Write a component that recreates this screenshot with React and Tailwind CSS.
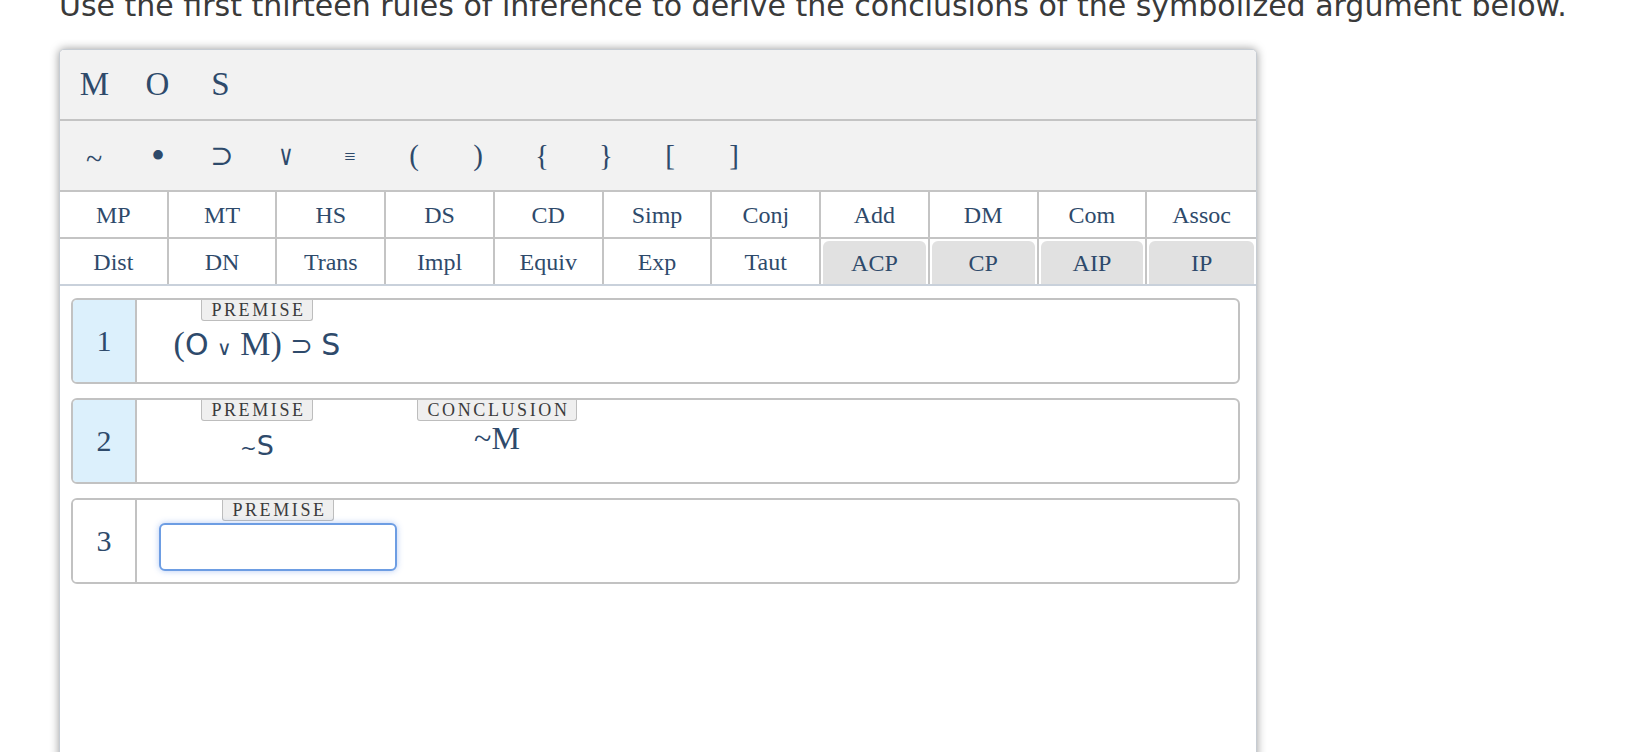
import React from 'react';

const serif = "font-['Liberation_Serif','DejaVu_Serif',serif]";
const sans = "font-['DejaVu_Sans',sans-serif]";

const letters = ['M', 'O', 'S'];
const symbols = ['~', '•', '⊃', '∨', '≡', '(', ')', '{', '}', '[', ']'];
const rulesTop = ['MP', 'MT', 'HS', 'DS', 'CD', 'Simp', 'Conj', 'Add', 'DM', 'Com', 'Assoc'];
const rulesBottom = ['Dist', 'DN', 'Trans', 'Impl', 'Equiv', 'Exp', 'Taut', 'ACP', 'CP', 'AIP', 'IP'];
const shaded = ['ACP', 'CP', 'AIP', 'IP'];

// per-symbol tweaks so the glyphs sit like the reference toolbar
const symbolStyle = {
    '~': 'text-[30px] pt-[6px]',
    '•': 'text-[40px] leading-none',
    '⊃': 'text-[28px]',
    '∨': 'text-[28px] scale-x-75',
    '≡': 'text-[20px]',
};

function Tag({ children }) {
    return (
        <div className={`${serif} text-[18px] leading-[20px] tracking-[2.6px] text-[#3c3c3c] bg-[#efefef] border border-t-0 border-[#bdbdbd] rounded-b-[3px] pl-[9px] pr-[6px]`}>
            {children}
        </div>
    );
}

function Cell({ label, children }) {
    return (
        <div className="mx-[22px] min-w-[196px] flex flex-col items-center">
            <Tag>{label}</Tag>
            {children}
        </div>
    );
}

function ProofRow({ num, active, children }) {
    return (
        <div className="flex h-[86px] rounded-[6px] border-2 border-[#c2c2c2] overflow-hidden">
            <div className={`w-[64px] shrink-0 border-r-2 border-[#c2c2c2] flex justify-center pt-[18px] ${serif} text-[30px] text-[#2e4a6b] ${active ? 'bg-[#dcf0fc]' : 'bg-white'}`}>
                {num}
            </div>
            <div className="flex">{children}</div>
        </div>
    );
}

export default function App() {
    return (
        <div className="h-[752px] overflow-hidden bg-white">
            <p className="ml-[59px] -mt-[11px] text-[30px] leading-[34px] text-[#3a3a3a] font-['DejaVu_Sans',sans-serif] whitespace-nowrap">
                Use the first thirteen rules of inference to derive the conclusions of the symbolized argument below.
            </p>

            <div className="ml-[59px] mt-[26px] w-[1198px] h-[720px] bg-white rounded-t-[5px] border border-[#c6ccd3] shadow-[0_0_10px_rgba(0,0,0,0.4)] overflow-hidden">
                {/* variables */}
                <div className={`h-[71px] bg-[#f2f2f2] border-b-2 border-[#c4c4c4] flex items-center pl-[3px] ${serif} text-[33px] text-[#2e4a6b]`}>
                    {letters.map((l) => (
                        <span key={l} className="w-[63px] text-center">{l}</span>
                    ))}
                </div>

                {/* operators */}
                <div className={`h-[71px] bg-[#f2f2f2] border-b-2 border-[#c4c4c4] flex items-center pl-[2px] ${serif} text-[29px] text-[#2e4a6b]`}>
                    {symbols.map((s, i) => (
                        <span key={i} className={`w-[64px] text-center ${symbolStyle[s] || ''}`}>{s}</span>
                    ))}
                </div>

                {/* rules */}
                <div className={`grid grid-cols-11 ${serif} text-[24px] text-[#2e4a6b] border-b-2 border-[#c9d1db]`}>
                    {rulesTop.map((r, i) => (
                        <div key={r} className={`h-[47px] flex items-center justify-center border-b-2 border-[#c4c4c4] ${i < 10 ? 'border-r-2' : ''}`}>
                            {r}
                        </div>
                    ))}
                    {rulesBottom.map((r, i) => (
                        <div key={r} className={`h-[45px] border-[#c4c4c4] ${i < 10 ? 'border-r-2' : ''} ${shaded.includes(r) ? 'px-[2px] pt-[2px]' : ''}`}>
                            <div className={`h-full flex items-center justify-center ${shaded.includes(r) ? 'bg-[#e1e1e1] rounded-t-[6px]' : ''}`}>
                                {r}
                            </div>
                        </div>
                    ))}
                </div>

                {/* proof lines */}
                <div className="pl-[11px] pr-[16px] pt-[12px] flex flex-col gap-[14px]">
                    <ProofRow num="1" active>
                        <Cell label="PREMISE">
                            <div className={`${serif} text-[34px] leading-[38px] mt-[4px] text-[#2e4a6b] whitespace-pre`}>
                                (<span className={`${sans} text-[30px]`}>O</span> <span className={`${sans} text-[20px]`}>∨</span> M) <span className={`${sans} text-[27px]`}>⊃</span> <span className={`${sans} text-[30px]`}>S</span>
                            </div>
                        </Cell>
                    </ProofRow>
                    <ProofRow num="2" active>
                        <Cell label="PREMISE">
                            <div className={`${sans} text-[27px] leading-[34px] mt-[8px] text-[#2e4a6b]`}>
                                <span className="text-[20px]">~</span>S
                            </div>
                        </Cell>
                        <Cell label="CONCLUSION">
                            <div className={`${serif} text-[32px] leading-[34px] text-[#2e4a6b]`}>~M</div>
                        </Cell>
                    </ProofRow>
                    <ProofRow num="3">
                        <Cell label="PREMISE">
                            <input
                                type="text"
                                className="mt-[2px] w-[238px] h-[48px] rounded-[6px] border-2 border-[#6d9de3] bg-white shadow-[0_0_6px_rgba(90,140,230,0.45)] outline-none"
                            />
                        </Cell>
                    </ProofRow>
                </div>
            </div>
        </div>
    );
}
